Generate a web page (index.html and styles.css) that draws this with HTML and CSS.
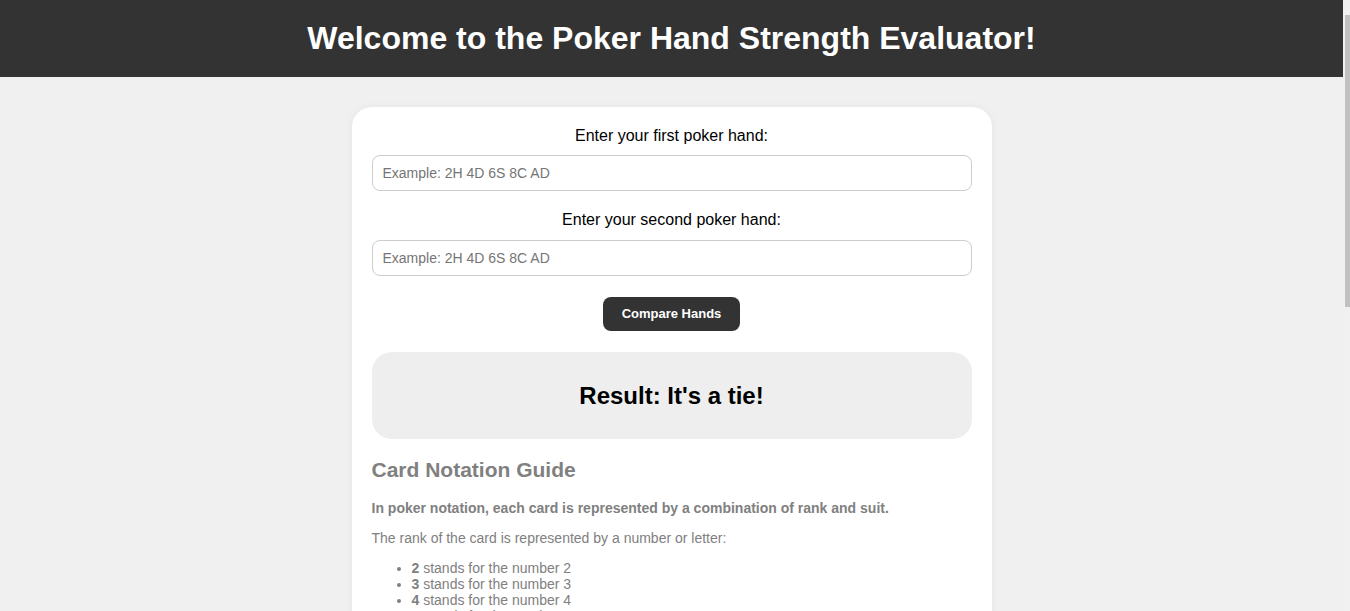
FILE: index.html
```html
<!DOCTYPE html>
<html lang="en">
<head>
<meta charset="utf-8">
<title>Poker Hand Strength Evaluator</title>
<link rel="stylesheet" href="styles.css">
</head>
<body>
<div class="app">
  <header class="top">
    <h1 class="title">Welcome to the Poker Hand Strength Evaluator!</h1>
  </header>
  <main class="page">
    <section class="card">
      <label class="label" for="h1">Enter your first poker hand:</label>
      <input class="field" id="h1" type="text" placeholder="Example: 2H 4D 6S 8C AD">
      <label class="label second" for="h2">Enter your second poker hand:</label>
      <input class="field" id="h2" type="text" placeholder="Example: 2H 4D 6S 8C AD">
      <div class="actions"><button class="btn" type="button">Compare Hands</button></div>
      <div class="result"><h2 class="result-text">Result: It's a tie!</h2></div>
      <div class="guide">
        <h2 class="guide-title">Card Notation Guide</h2>
        <p class="guide-p"><strong>In poker notation, each card is represented by a combination of rank and suit.</strong></p>
        <p class="guide-p">The rank of the card is represented by a number or letter:</p>
        <ul class="guide-list">
          <li><strong>2</strong> stands for the number 2</li>
          <li><strong>3</strong> stands for the number 3</li>
          <li><strong>4</strong> stands for the number 4</li>
          <li><strong>5</strong> stands for the number 5</li>
          <li><strong>6</strong> stands for the number 6</li>
          <li><strong>7</strong> stands for the number 7</li>
          <li><strong>8</strong> stands for the number 8</li>
          <li><strong>9</strong> stands for the number 9</li>
          <li><strong>T</strong> stands for the number 10</li>
          <li><strong>J</strong> stands for Jack</li>
          <li><strong>Q</strong> stands for Queen</li>
          <li><strong>K</strong> stands for King</li>
          <li><strong>A</strong> stands for Ace</li>
        </ul>
        <p class="guide-p">The suit of the card is represented by a letter:</p>
        <ul class="guide-list">
          <li><strong>H</strong> stands for Hearts</li>
          <li><strong>D</strong> stands for Diamonds</li>
          <li><strong>C</strong> stands for Clubs</li>
          <li><strong>S</strong> stands for Spades</li>
        </ul>
      </div>
    </section>
  </main>
</div>
<div class="scrollbar" aria-hidden="true"><div class="scroll-thumb"></div></div>
</body>
</html>
```
FILE: styles.css
```css
html, body {
  margin: 0;
  padding: 0;
}
body {
  background: #f0f0f0;
  font-family: "Liberation Sans", Arial, sans-serif;
  color: #000;
}
.app {
  margin-right: 7px;
}
.top {
  background: #333;
  color: #fff;
  text-align: center;
  padding: 20px 0;
}
.title {
  margin: 0;
  font-size: 32px;
  line-height: 37px;
  font-weight: bold;
}
.page {
  display: flex;
  justify-content: center;
  padding: 30px 0 40px;
}
.card {
  width: 640px;
  box-sizing: border-box;
  background: #fff;
  border-radius: 20px;
  padding: 20px;
  box-shadow: 0 0 8px rgba(0,0,0,0.05);
}
.label {
  display: block;
  text-align: center;
  font-size: 16px;
  line-height: 18.4px;
  margin-bottom: 10px;
}
.label.second {
  margin-top: 20px;
}
.field {
  display: block;
  width: 100%;
  box-sizing: border-box;
  height: 36px;
  padding: 0 10px;
  border: 1px solid #ccc;
  border-radius: 8px;
  font-family: "Liberation Sans", Arial, sans-serif;
  font-size: 14px;
  color: #000;
  background: #fff;
}
.field::placeholder {
  color: #757575;
}
.actions {
  display: flex;
  justify-content: center;
  margin-top: 21px;
}
.btn {
  background: #333;
  color: #fff;
  border: none;
  border-radius: 8px;
  height: 34px;
  padding: 0 19px;
  font-family: "Liberation Sans", Arial, sans-serif;
  font-size: 13px;
  font-weight: bold;
}
.result {
  margin-top: 21px;
  background: #eee;
  border-radius: 20px;
  padding: 30px 20px;
  text-align: center;
}
.result-text {
  margin: 0;
  font-size: 24px;
  line-height: 27px;
  font-weight: bold;
}
.guide {
  color: #808080;
}
.guide-title {
  font-size: 21px;
  line-height: 24px;
  margin: 19px 0 18px;
  font-weight: bold;
}
.guide-p {
  font-size: 14px;
  line-height: 16px;
  margin: 14px 0;
}
.guide-list {
  font-size: 14px;
  line-height: 16px;
  margin: 14px 0;
  padding-left: 40px;
}
.scrollbar {
  position: fixed;
  top: 0;
  right: 0;
  bottom: 0;
  width: 7px;
  background: #f1f1f1;
}
.scroll-thumb {
  margin: 15px 0 0 2px;
  height: 292px;
  background: #c1c1c1;
}
```
